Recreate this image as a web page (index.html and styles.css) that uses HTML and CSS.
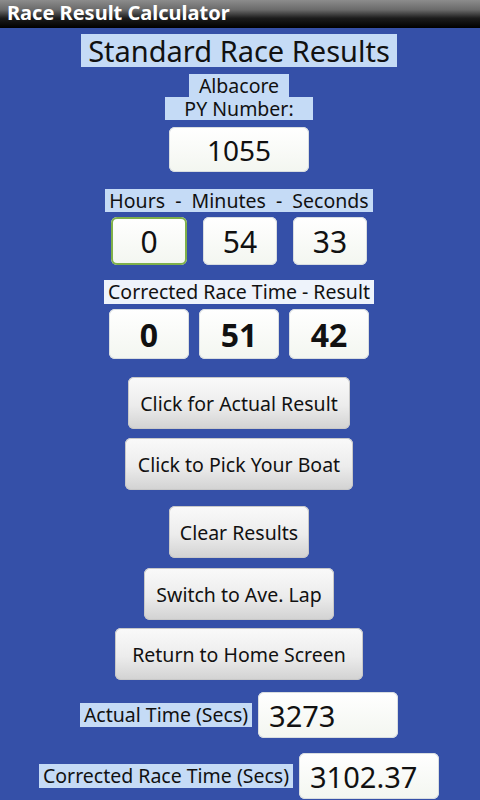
FILE: index.html
```html
<!DOCTYPE html>
<html lang="en">
<head>
  <meta charset="UTF-8">
  <meta name="viewport" content="width=device-width, initial-scale=1">
  <title>Race Result Calculator</title>
  <link rel="stylesheet" href="styles.css">
</head>
<body>

  <div class="title-bar">Race Result Calculator</div>

  <div class="screen">
    <h1 class="label heading">Standard Race Results</h1>
    <div class="label boat-name">Albacore</div>
    <div class="label py-label">PY Number:</div>
    <div class="field py-field">1055</div>

    <div class="label hms-label">Hours &nbsp;- &nbsp;Minutes &nbsp;- &nbsp;Seconds</div>
    <div class="time-row">
      <div class="field time-field focused">0</div>
      <div class="field time-field">54</div>
      <div class="field time-field">33</div>
    </div>

    <div class="label result-label">Corrected Race Time - Result</div>
    <div class="result-row">
      <div class="field result-field">0</div>
      <div class="field result-field">51</div>
      <div class="field result-field">42</div>
    </div>

    <button class="btn btn-actual">Click for Actual Result</button>
    <button class="btn btn-boat">Click to Pick Your Boat</button>
    <button class="btn btn-clear">Clear Results</button>
    <button class="btn btn-lap">Switch to Ave. Lap</button>
    <button class="btn btn-home">Return to Home Screen</button>

    <div class="secs-row actual-row">
      <span class="label secs-label">Actual Time (Secs)</span>
      <div class="field secs-field">3273</div>
    </div>
    <div class="secs-row corrected-row">
      <span class="label secs-label">Corrected Race Time (Secs)</span>
      <div class="field secs-field">3102.37</div>
    </div>
  </div>

</body>
</html>
```

FILE: styles.css
```css
body {
  margin: 0;
  width: 480px;
  height: 800px;
  overflow: hidden;
  background: #3550a8;
  font-family: "Noto Sans", "Open Sans", sans-serif;
  color: #111;
}
.title-bar {
  height: 28px;
  padding-left: 7px;
  background: linear-gradient(#8c8c8c 0%, #6a6a6a 35%, #1c1c1c 65%, #000 100%);
  color: white;
  font-weight: bold;
  font-size: 20px;
  line-height: 25px;
}
.screen {
  display: flex;
  flex-direction: column;
  align-items: center;
  padding-right: 2px;
}
.label {
  background-color: #c5dbf6;
  font-size: 19.5px;
  line-height: 23px;
  padding: 0 4px;
}
.heading {
  margin: 6px 0 0;
  font-size: 29px;
  font-weight: normal;
  line-height: 33px;
  padding: 0 7px;
}
.boat-name {
  margin-top: 7px;
  padding: 0 10px;
}
.py-label {
  padding: 0 19px;
}
.field {
  background: linear-gradient(#ffffff, #f3f6f0);
  border-radius: 6px;
  box-sizing: border-box;
  display: flex;
  align-items: center;
  justify-content: center;
  box-shadow: inset 0 0 0 1px #d8dde0;
}
.py-field {
  margin-top: 7px;
  width: 140px;
  height: 45px;
  font-size: 28px;
}
.hms-label {
  margin-top: 17px;
}
.time-row {
  display: flex;
  gap: 16px;
  margin-top: 5px;
}
.time-field {
  width: 74px;
  height: 48px;
  font-size: 30px;
}
.time-field.focused {
  width: 76px;
  box-shadow: inset 0 0 0 2px #7fb04a;
}
.result-label {
  margin-top: 15px;
  background-color: #eef3fb;
  line-height: 24px;
}
.result-row {
  display: flex;
  gap: 10px;
  margin-top: 5px;
}
.result-field {
  width: 80px;
  height: 50px;
  font-size: 32px;
  font-weight: bold;
}
.btn {
  height: 52px;
  border: none;
  border-radius: 6px;
  background: linear-gradient(#fafafa 0%, #ececec 55%, #d2d2d2 100%);
  box-shadow: inset 0 0 0 1px #c8c8c8;
  font-family: inherit;
  font-size: 19.5px;
  color: #111;
  padding: 0;
}
.btn-actual {
  margin-top: 18px;
  width: 222px;
}
.btn-boat {
  margin-top: 9px;
  width: 228px;
}
.btn-clear {
  margin-top: 16px;
  width: 140px;
}
.btn-lap {
  margin-top: 10px;
  width: 190px;
}
.btn-home {
  margin-top: 8px;
  width: 248px;
}
.secs-row {
  display: flex;
  align-items: center;
  gap: 6px;
}
.actual-row {
  margin-top: 12px;
}
.corrected-row {
  margin-top: 15px;
}
.secs-label {
  font-size: 19.5px;
  line-height: 24px;
  padding: 0 4px;
}
.secs-field {
  width: 140px;
  height: 46px;
  font-size: 29px;
  justify-content: flex-start;
  padding-left: 11px;
}
```
